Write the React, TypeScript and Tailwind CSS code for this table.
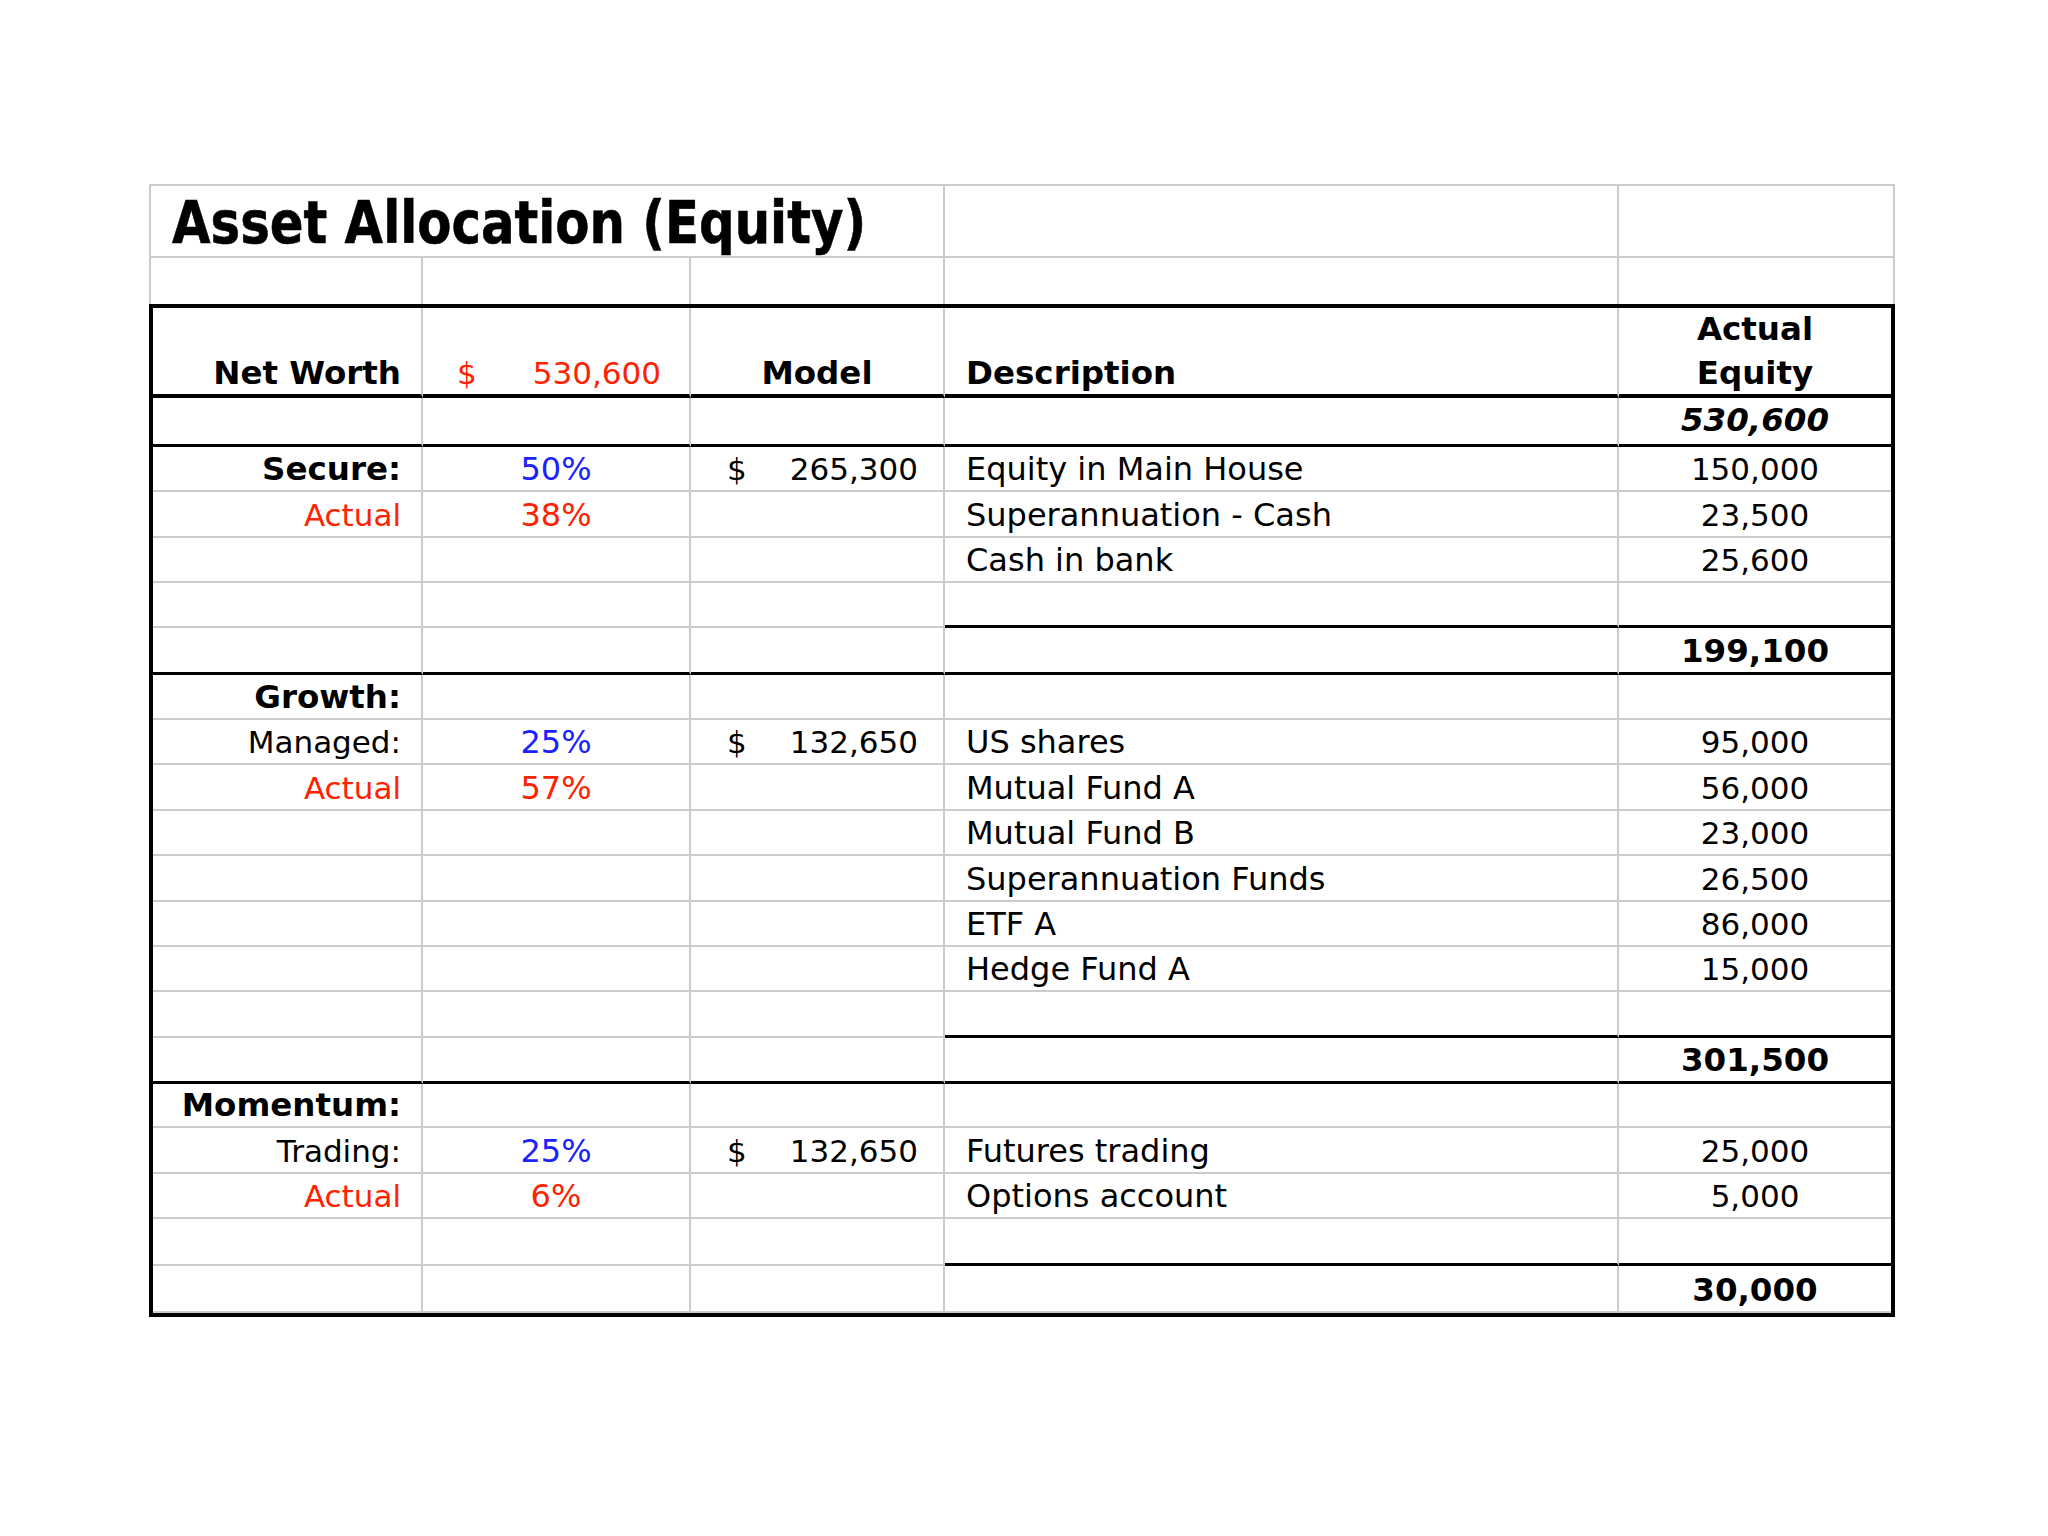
import React from 'react';

type Border = 'grey' | 'black' | 'partial' | 'header';

const WIDTHS = ['w-[270px]', 'w-[268px]', 'w-[254px]', 'w-[674px]', 'w-[272px]'];
const ALIGN = [
  'justify-end pr-[20px]',
  'justify-center',
  'justify-center',
  'justify-start pl-[21px] text-[32px]',
  'justify-center',
];

function bottomClass(b: Border, col: number) {
  if (b === 'header') return 'border-b-4 border-b-black';
  if (b === 'black') return 'border-b-[3px] border-b-black';
  if (b === 'partial') return col >= 3 ? 'border-b-[3px] border-b-black' : 'border-b-2 border-b-[#cccccc]';
  return 'border-b-2 border-b-[#cccccc]';
}

const B = ({ children }: { children: React.ReactNode }) => <span className="font-bold text-[32.5px]">{children}</span>;
const BI = ({ children }: { children: React.ReactNode }) => <span className="font-bold italic text-[32.5px]">{children}</span>;
const Red = ({ children }: { children: React.ReactNode }) => <span className="text-[#ff2200]">{children}</span>;
const Pct = ({ children, red }: { children: React.ReactNode; red?: boolean }) => (
  <span className={`text-[32px] ${red ? 'text-[#ff2200]' : 'text-[#1a22ff]'}`}>{children}</span>
);

const Model = ({ v }: { v: string }) => (
  <div className="flex w-full justify-between pl-[36px] pr-[25px]">
    <span>$</span>
    <span>{v}</span>
  </div>
);

const NetWorth = () => (
  <div className="flex w-full justify-between pl-[34px] pr-[28px] text-[#ff2200]">
    <span>$</span>
    <span>530,600</span>
  </div>
);

const ActualEquity = () => (
  <div className="flex flex-col items-center gap-[13px] font-bold text-[32.5px]">
    <span>Actual</span>
    <span>Equity</span>
  </div>
);

type Row = { h: string; b: Border; pb?: string; c: (React.ReactNode | null)[] };

const rows: Row[] = [
  { h: 'h-[90px]', b: 'header', c: [<B>Net Worth</B>, <NetWorth />, <B>Model</B>, <B>Description</B>, <ActualEquity />] },
  { h: 'h-[49px]', b: 'black', pb: 'pb-[8px]', c: [null, null, null, null, <BI>530,600</BI>] },
  { h: 'h-[45px]', b: 'grey', c: [<B>Secure:</B>, <Pct>50%</Pct>, <Model v="265,300" />, 'Equity in Main House', '150,000'] },
  { h: 'h-[46px]', b: 'grey', c: [<Red>Actual</Red>, <Pct red>38%</Pct>, null, 'Superannuation - Cash', '23,500'] },
  { h: 'h-[45px]', b: 'grey', c: [null, null, null, 'Cash in bank', '25,600'] },
  { h: 'h-[45px]', b: 'partial', c: [null, null, null, null, null] },
  { h: 'h-[47px]', b: 'black', c: [null, null, null, null, <B>199,100</B>] },
  { h: 'h-[45px]', b: 'grey', c: [<B>Growth:</B>, null, null, null, null] },
  { h: 'h-[45px]', b: 'grey', c: ['Managed:', <Pct>25%</Pct>, <Model v="132,650" />, 'US shares', '95,000'] },
  { h: 'h-[46px]', b: 'grey', c: [<Red>Actual</Red>, <Pct red>57%</Pct>, null, 'Mutual Fund A', '56,000'] },
  { h: 'h-[45px]', b: 'grey', c: [null, null, null, 'Mutual Fund B', '23,000'] },
  { h: 'h-[46px]', b: 'grey', c: [null, null, null, 'Superannuation Funds', '26,500'] },
  { h: 'h-[45px]', b: 'grey', c: [null, null, null, 'ETF A', '86,000'] },
  { h: 'h-[45px]', b: 'grey', c: [null, null, null, 'Hedge Fund A', '15,000'] },
  { h: 'h-[46px]', b: 'partial', c: [null, null, null, null, null] },
  { h: 'h-[46px]', b: 'black', c: [null, null, null, null, <B>301,500</B>] },
  { h: 'h-[44px]', b: 'grey', c: [<B>Momentum:</B>, null, null, null, null] },
  { h: 'h-[46px]', b: 'grey', c: ['Trading:', <Pct>25%</Pct>, <Model v="132,650" />, 'Futures trading', '25,000'] },
  { h: 'h-[45px]', b: 'grey', c: [<Red>Actual</Red>, <Pct red>6%</Pct>, null, 'Options account', '5,000'] },
  { h: 'h-[47px]', b: 'partial', c: [null, null, null, null, null] },
  { h: 'h-[47px]', b: 'grey', c: [null, null, null, null, <B>30,000</B>] },
];

export default function App() {
  return (
    <div className="w-[2048px] h-[1536px] bg-white pt-[184px] pl-[149px] font-['DejaVu_Sans',sans-serif] text-[31px] leading-[31px] text-black">
      {/* Title area */}
      <div className="w-[1746px] border-t-2 border-l-2 border-[#cccccc]">
        <div className="flex h-[72px]">
          <div className="w-[794px] flex items-end pl-[21px] pb-[4px] border-r-2 border-b-2 border-[#cccccc]">
            <span className="inline-block origin-left scale-x-[0.858] whitespace-nowrap font-bold text-[58px] leading-[58px] [-webkit-text-stroke:0.6px_black]">
              Asset Allocation (Equity)
            </span>
          </div>
          <div className="w-[674px] border-r-2 border-b-2 border-[#cccccc]" />
          <div className="w-[276px] border-r-2 border-b-2 border-[#cccccc]" />
        </div>
        <div className="flex h-[46px]">
          {['w-[272px]', 'w-[268px]', 'w-[254px]', 'w-[674px]', 'w-[276px]'].map((w, i) => (
            <div key={i} className={`${w} border-r-2 border-[#cccccc]`} />
          ))}
        </div>
      </div>

      {/* Main table */}
      <div className="w-[1746px] border-4 border-black">
        {rows.map((r, ri) => (
          <div key={ri} className={`flex ${r.h}`}>
            {r.c.map((cell, ci) => (
              <div
                key={ci}
                className={`${WIDTHS[ci]} flex items-end ${r.pb ?? 'pb-[5px]'} whitespace-nowrap ${ALIGN[ci]} ${
                  ci < 4 ? 'border-r-2 border-r-[#cccccc]' : ''
                } ${bottomClass(r.b, ci)}`}
              >
                {cell}
              </div>
            ))}
          </div>
        ))}
      </div>
    </div>
  );
}
